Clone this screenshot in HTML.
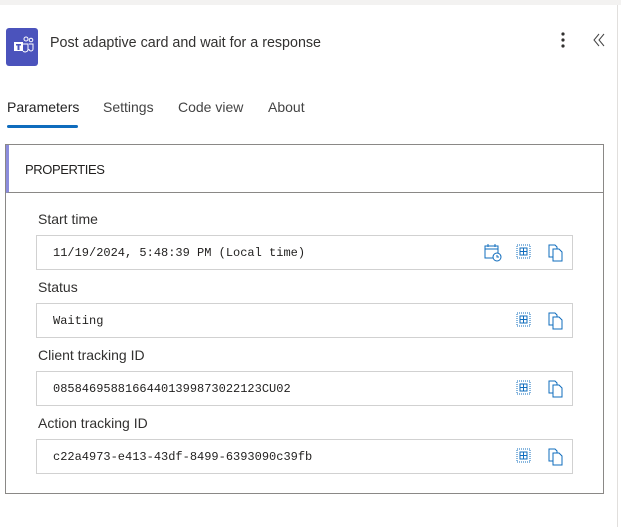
<!DOCTYPE html>
<html><head><meta charset="utf-8"><style>
*{margin:0;padding:0;box-sizing:border-box}
body{width:621px;height:527px;background:#fff;font-family:"Liberation Sans",sans-serif;color:#323130;position:relative;overflow:hidden}
.top{position:absolute;left:0;top:0;width:621px;height:5px;background:#f3f2f1}
.vl{position:absolute;left:617px;top:5px;width:1px;height:522px;background:#e1dfdd}
.icon{position:absolute;left:6px;top:28px;width:32px;height:38px;background:#4b53bc;border-radius:3px}
.title{position:absolute;left:50px;top:35px;font-size:14.3px;color:#323130}
.tab{position:absolute;top:99px;font-size:14px;color:#444}
.ul{position:absolute;left:7px;top:125px;width:71px;height:3px;background:#0f6cbd;border-radius:2px}
.box{position:absolute;left:5px;top:144px;width:599px;height:350px;border:1px solid #8a8886}
.hdr{position:absolute;left:0;top:0;width:597px;height:48px;border-bottom:1px solid #8a8886;border-left:3px solid #8b8cdc}
.hdr span{position:absolute;left:16px;top:17px;font-size:13px;letter-spacing:-0.4px;color:#201f1e}
.lbl{position:absolute;left:38px;font-size:14px;color:#323130}
.in{position:absolute;left:36px;width:537px;height:35px;border:1px solid #d1d1d1}
.in span{position:absolute;left:16px;top:10px;font-family:"Liberation Mono",monospace;font-size:12px;color:#201f1e}
.ic{position:absolute;top:8px}
</style></head><body>
<div class="top"></div><div class="vl"></div>
<div class="icon"><svg width="32" height="38" viewBox="0 0 32 38"><rect x="8" y="14" width="9" height="9" fill="#fff"/><rect x="11.5" y="16" width="2" height="6" fill="#4b53bc"/><rect x="10" y="16" width="5" height="1.5" fill="#4b53bc"/><circle cx="20" cy="11" r="2" fill="none" stroke="#fff"/><circle cx="25" cy="12" r="1.8" fill="none" stroke="#fff"/><path d="M17 16h5v6a3 3 0 0 1-5 1" fill="none" stroke="#fff"/><path d="M23 16h4v5a2 2 0 0 1-4 0" fill="none" stroke="#fff"/></svg></div>
<div class="title">Post adaptive card and wait for a response</div>
<svg style="position:absolute;left:560px;top:32px" width="6" height="16"><circle cx="3" cy="2" r="1.6" fill="#323130"/><circle cx="3" cy="8" r="1.6" fill="#323130"/><circle cx="3" cy="14" r="1.6" fill="#323130"/></svg>
<svg style="position:absolute;left:593px;top:33px" width="12" height="14"><path d="M6 1L1 7l5 6M11 1L6 7l5 6" fill="none" stroke="#444" stroke-width="1"/></svg>
<div class="tab" style="left:7px;color:#242424">Parameters</div>
<div class="tab" style="left:103px">Settings</div>
<div class="tab" style="left:178px">Code view</div>
<div class="tab" style="left:268px">About</div>
<div class="ul"></div>
<div class="box"><div class="hdr"><span>PROPERTIES</span></div></div>

<div class="lbl" style="top:211px">Start time</div>
<div class="in" style="top:235px"><span>11/19/2024, 5:48:39 PM (Local time)</span>
<svg class="ic" style="left:447px" width="18" height="18"><rect x="1" y="2" width="13" height="12" fill="none" stroke="#0f6cbd"/><path d="M1 5h13M4 0v3M11 0v3" stroke="#0f6cbd"/><circle cx="13" cy="13" r="4" fill="#fff" stroke="#0f6cbd"/><path d="M13 11v2h2" fill="none" stroke="#0f6cbd"/></svg>
<svg class="ic" style="left:479px" width="16" height="16"><rect x="1" y="1" width="13" height="13" fill="none" stroke="#0f6cbd" stroke-dasharray="1 1"/><rect x="4" y="4" width="7" height="7" fill="none" stroke="#0f6cbd"/><path d="M7.5 4v7M4 7.5h7" stroke="#0f6cbd"/></svg>
<svg class="ic" style="left:511px" width="16" height="18"><path d="M1 1h6l2 2v10H1z" fill="#fff" stroke="#0f6cbd"/><path d="M5 5h6l3 3v9H5z" fill="#fff" stroke="#0f6cbd"/></svg></div>

<div class="lbl" style="top:279px">Status</div>
<div class="in" style="top:303px"><span>Waiting</span>
<svg class="ic" style="left:479px" width="16" height="16"><rect x="1" y="1" width="13" height="13" fill="none" stroke="#0f6cbd" stroke-dasharray="1 1"/><rect x="4" y="4" width="7" height="7" fill="none" stroke="#0f6cbd"/><path d="M7.5 4v7M4 7.5h7" stroke="#0f6cbd"/></svg>
<svg class="ic" style="left:511px" width="16" height="18"><path d="M1 1h6l2 2v10H1z" fill="#fff" stroke="#0f6cbd"/><path d="M5 5h6l3 3v9H5z" fill="#fff" stroke="#0f6cbd"/></svg></div>

<div class="lbl" style="top:347px">Client tracking ID</div>
<div class="in" style="top:371px"><span>08584695881664401399873022123CU02</span>
<svg class="ic" style="left:479px" width="16" height="16"><rect x="1" y="1" width="13" height="13" fill="none" stroke="#0f6cbd" stroke-dasharray="1 1"/><rect x="4" y="4" width="7" height="7" fill="none" stroke="#0f6cbd"/><path d="M7.5 4v7M4 7.5h7" stroke="#0f6cbd"/></svg>
<svg class="ic" style="left:511px" width="16" height="18"><path d="M1 1h6l2 2v10H1z" fill="#fff" stroke="#0f6cbd"/><path d="M5 5h6l3 3v9H5z" fill="#fff" stroke="#0f6cbd"/></svg></div>

<div class="lbl" style="top:415px">Action tracking ID</div>
<div class="in" style="top:439px"><span>c22a4973-e413-43df-8499-6393090c39fb</span>
<svg class="ic" style="left:479px" width="16" height="16"><rect x="1" y="1" width="13" height="13" fill="none" stroke="#0f6cbd" stroke-dasharray="1 1"/><rect x="4" y="4" width="7" height="7" fill="none" stroke="#0f6cbd"/><path d="M7.5 4v7M4 7.5h7" stroke="#0f6cbd"/></svg>
<svg class="ic" style="left:511px" width="16" height="18"><path d="M1 1h6l2 2v10H1z" fill="#fff" stroke="#0f6cbd"/><path d="M5 5h6l3 3v9H5z" fill="#fff" stroke="#0f6cbd"/></svg></div>
</body></html>
